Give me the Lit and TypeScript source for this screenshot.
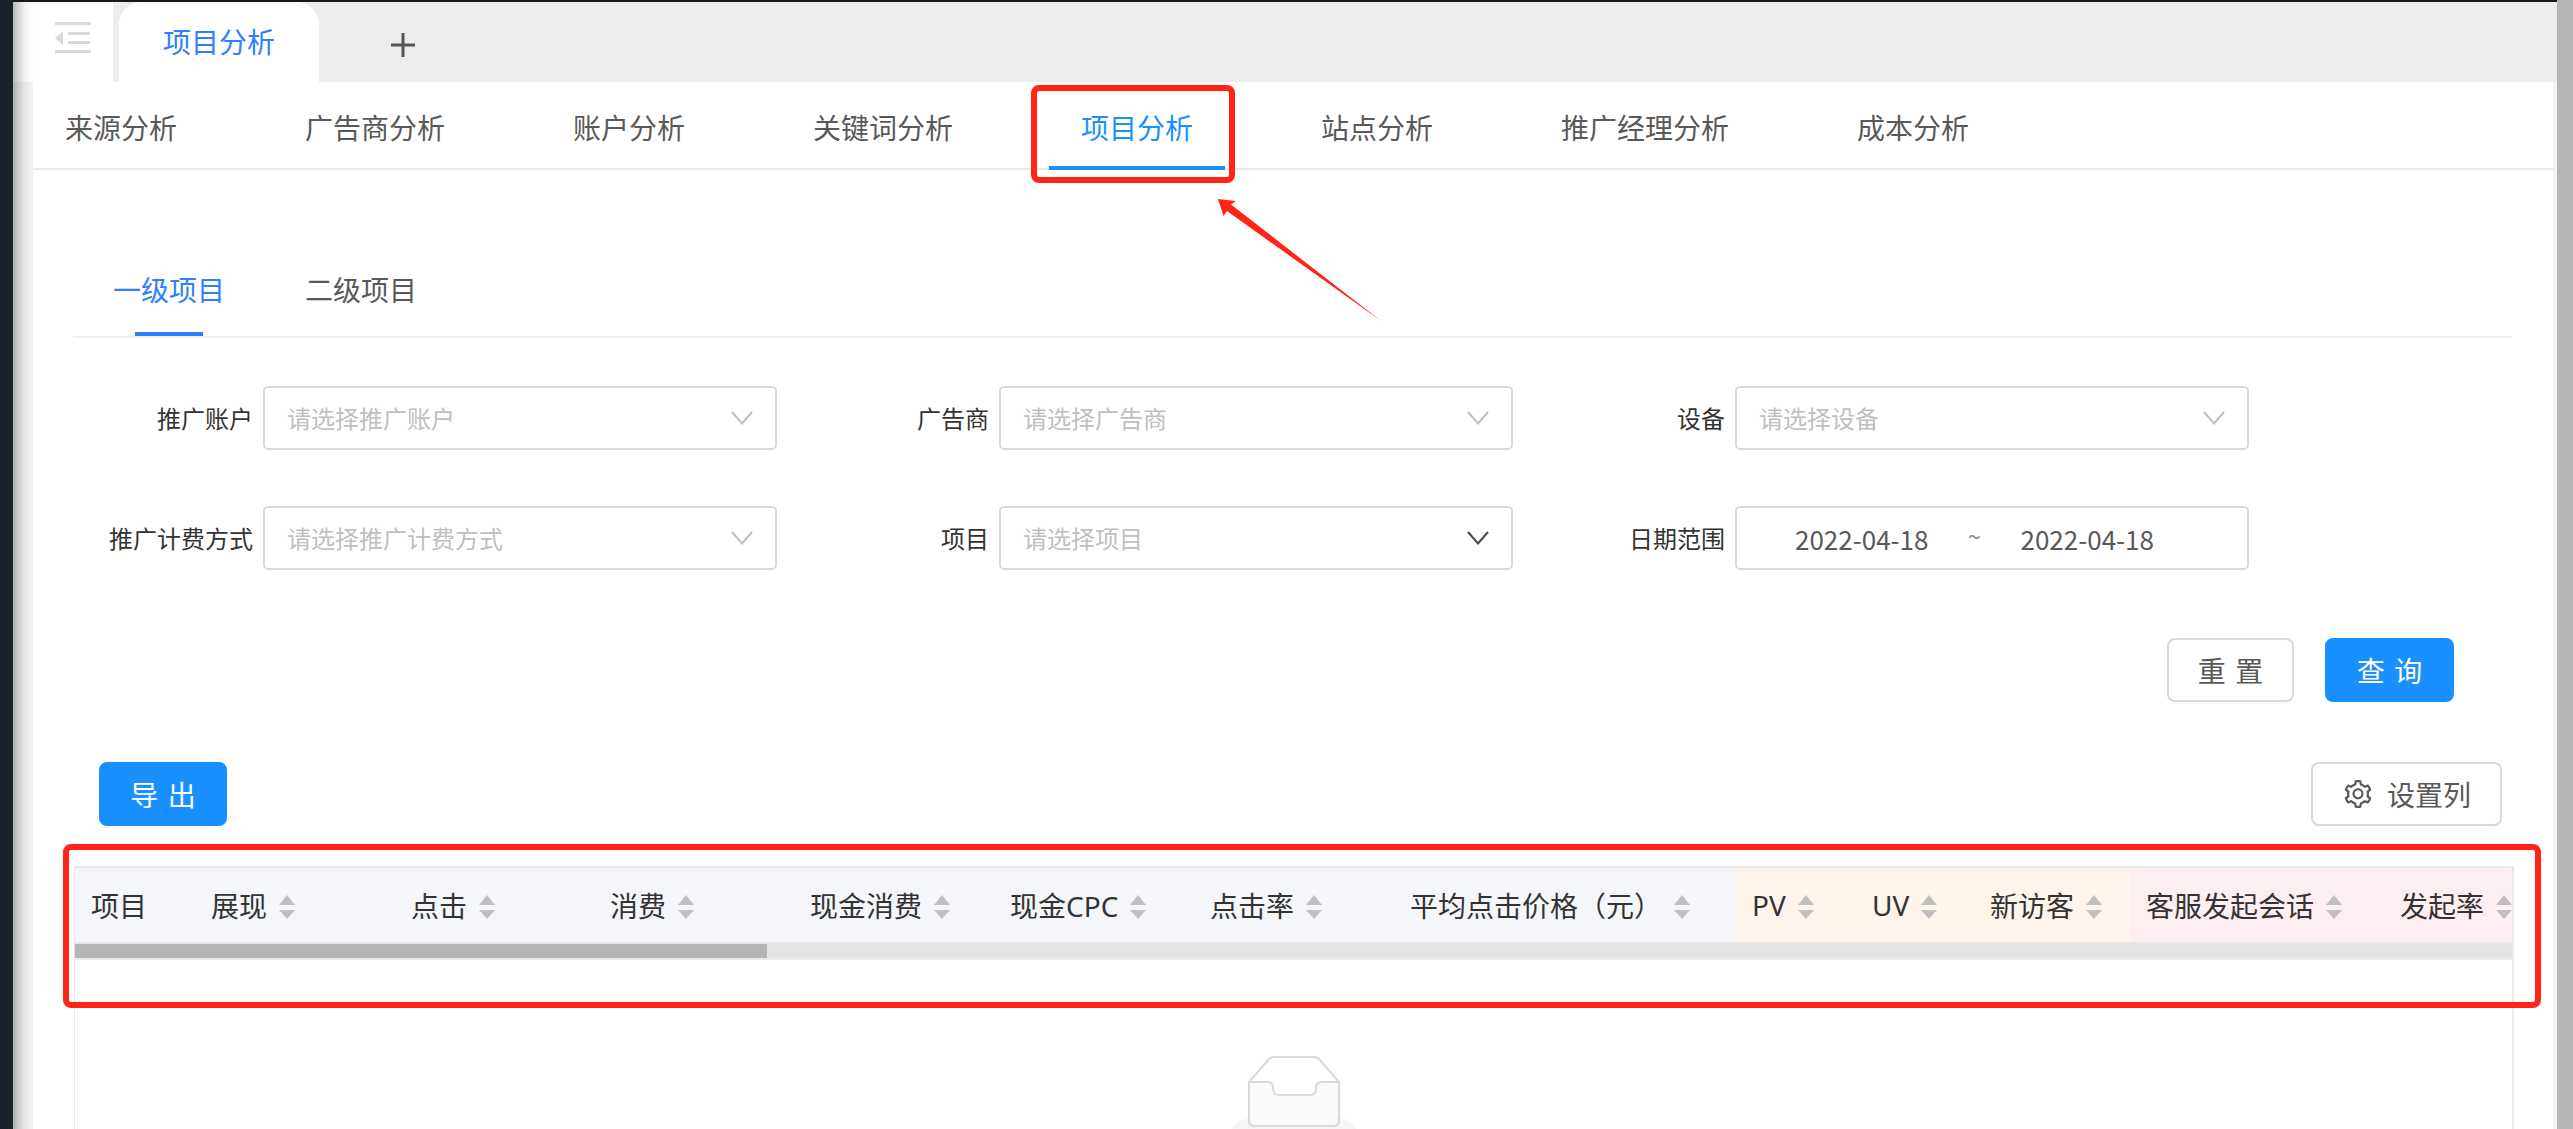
import { LitElement, html, css, svg } from "lit";
import { customElement } from "lit/decorators.js";

const NAV = ["来源分析", "广告商分析", "账户分析", "关键词分析", "项目分析", "站点分析", "推广经理分析", "成本分析"];
const FIELDS = [
  { label: "推广账户", ph: "请选择推广账户" },
  { label: "广告商", ph: "请选择广告商" },
  { label: "设备", ph: "请选择设备" },
  { label: "推广计费方式", ph: "请选择推广计费方式" },
  { label: "项目", ph: "请选择项目", dark: true },
];
const COLS = [
  { t: "项目", w: 120, sort: false, g: "" },
  { t: "展现", w: 200, sort: true, g: "" },
  { t: "点击", w: 199, sort: true, g: "" },
  { t: "消费", w: 200, sort: true, g: "" },
  { t: "现金消费", w: 200, sort: true, g: "" },
  { t: "现金CPC", w: 200, sort: true, g: "" },
  { t: "点击率", w: 200, sort: true, g: "" },
  { t: "平均点击价格（元）", w: 342, sort: true, g: "" },
  { t: "PV", w: 120, sort: true, g: "orange" },
  { t: "UV", w: 118, sort: true, g: "orange" },
  { t: "新访客", w: 156, sort: true, g: "orange" },
  { t: "客服发起会话", w: 254, sort: true, g: "pink" },
  { t: "发起率", w: 200, sort: true, g: "pink" },
];

const GEAR =
  "M924.8 625.7l-65.5-56c3.1-19 4.7-38.4 4.7-57.8s-1.6-38.8-4.7-57.8l65.5-56a32.03 32.03 0 0 0 9.3-35.2l-.9-2.6a443.74 443.74 0 0 0-79.7-137.9l-1.8-2.1a32.12 32.12 0 0 0-35.1-9.5l-81.3 28.9c-30-24.6-63.5-44-99.7-57.6l-15.7-85a32.05 32.05 0 0 0-25.8-25.7l-2.7-.5c-52.1-9.4-106.9-9.4-159 0l-2.7.5a32.05 32.05 0 0 0-25.8 25.7l-15.8 85.4a351.86 351.86 0 0 0-99 57.4l-81.9-29.1a32 32 0 0 0-35.1 9.5l-1.8 2.1a446.02 446.02 0 0 0-79.7 137.9l-.9 2.6c-4.5 12.5-.8 26.5 9.3 35.2l66.3 56.6c-3.1 18.8-4.6 38-4.6 57.1 0 19.2 1.5 38.4 4.6 57.1L99 625.5a32.03 32.03 0 0 0-9.3 35.2l.9 2.6c18.1 50.4 44.9 96.9 79.7 137.9l1.8 2.1a32.12 32.12 0 0 0 35.1 9.5l81.9-29.1c29.8 24.5 63.1 43.9 99 57.4l15.8 85.4a32.05 32.05 0 0 0 25.8 25.7l2.7.5a449.4 449.4 0 0 0 159 0l2.7-.5a32.05 32.05 0 0 0 25.8-25.7l15.7-85a350 350 0 0 0 99.7-57.6l81.3 28.9a32 32 0 0 0 35.1-9.5l1.8-2.1c34.8-41.1 61.6-87.5 79.7-137.9l.9-2.6c4.5-12.3.8-26.3-9.3-35zM788.3 465.9c2.5 15.1 3.8 30.6 3.8 46.1s-1.3 31-3.8 46.1l-6.6 40.1 74.7 63.9a370.03 370.03 0 0 1-42.6 73.6L721 702.8l-31.4 25.8c-23.9 19.6-50.5 35-79.3 45.8l-38.1 14.3-17.9 97a377.5 377.5 0 0 1-85 0l-17.9-97.2-37.8-14.5c-28.5-10.8-55-26.2-78.7-45.7l-31.4-25.9-93.4 33.2c-17-22.9-31.2-47.6-42.6-73.6l75.5-64.5-6.5-40c-2.4-14.9-3.7-30.3-3.7-45.5 0-15.3 1.2-30.6 3.7-45.5l6.5-40-75.5-64.5c11.3-26.1 25.6-50.7 42.6-73.6l93.4 33.2 31.4-25.9c23.7-19.5 50.2-34.9 78.7-45.7l37.9-14.3 17.9-97.2c28.1-3.2 56.8-3.2 85 0l17.9 97 38.1 14.3c28.7 10.8 55.4 26.2 79.3 45.8l31.4 25.8 92.8-32.9c17 22.9 31.2 47.6 42.6 73.6L781.8 426l6.5 39.9zM512 326c-97.2 0-176 78.8-176 176s78.8 176 176 176 176-78.8 176-176-78.8-176-176-176zm79.2 255.2A111.6 111.6 0 0 1 512 614c-29.9 0-58-11.7-79.2-32.8A111.6 111.6 0 0 1 400 502c0-29.9 11.7-58 32.8-79.2C454 401.6 482.1 390 512 390c29.9 0 58 11.6 79.2 32.8A111.6 111.6 0 0 1 624 502c0 29.9-11.7 58-32.8 79.2z";

const chevron = (dark?: boolean) => html`<svg class="chev ${dark ? "dark" : ""}" width="22" height="14" viewBox="0 0 22 14">
  <polyline points="1,1 11,12.5 21,1" fill="none" stroke="currentColor" stroke-width="2"></polyline>
</svg>`;

const sorter = html`<svg class="sorter" width="16" height="24" viewBox="0 0 16 24">
  <polygon points="8,0 16,10 0,10" fill="#bfbfbf"></polygon>
  <polygon points="0,15 16,15 8,24" fill="#bfbfbf"></polygon>
</svg>`;

@customElement("app-root")
export class AppRoot extends LitElement {
  static styles = css`
    :host {
      display: block;
      width: 100vw;
      height: 100vh;
      overflow: hidden;
      position: relative;
      background: #fff;
      font-family: "Noto Sans CJK SC", "Noto Sans", sans-serif;
      color: #333;
    }
    .shell { display: flex; height: 100%; }
    .rail-left { width: 13px; flex: none; background: #1c222c; }
    .rail-right { width: 16px; flex: none; background: #b5b5b7; }
    .content {
      flex: 1;
      min-width: 0;
      display: flex;
      flex-direction: column;
      border-top: 2px solid #17171f;
      position: relative;
    }
    .content::before {
      content: "";
      position: absolute;
      left: 0;
      top: 0;
      bottom: 0;
      width: 20px;
      background: linear-gradient(90deg, rgba(0,0,0,.28), rgba(0,0,0,.06) 55%, rgba(0,0,0,0));
      z-index: 2;
    }

    /* top tab strip */
    .tabbar { height: 80px; flex: none; display: flex; background: #ededed; }
    .toggle {
      width: 100px;
      flex: none;
      background: #fff;
      padding: 20px 0 0 42px;
      box-sizing: border-box;
    }
    .page-tab {
      margin-left: 6px;
      width: 200px;
      box-sizing: border-box;
      background: #fff;
      border-radius: 22px 22px 0 0;
      text-align: center;
      font-size: 28px;
      line-height: 78px;
      color: #2e80ff;
    }
    .plus { margin: 31px 0 0 72px; }

    .body { flex: 1; min-height: 0; display: flex; background: #f3f3f3; padding: 0 4px 0 20px; }
    .main { flex: 1; min-width: 0; background: #fff; display: flex; flex-direction: column; }

    /* second-level nav */
    .nav {
      height: 88px;
      flex: none;
      box-sizing: border-box;
      display: flex;
      gap: 64px;
      border-bottom: 2px solid #e8e8e8;
    }
    .nav-item {
      height: 88px;
      box-sizing: border-box;
      padding: 0 32px;
      font-size: 28px;
      line-height: 90px;
      color: #595959;
      border-bottom: 4px solid transparent;
      white-space: nowrap;
    }
    .nav-item.active { color: #1890ff; border-bottom-color: #1890ff; }

    /* third-level tabs */
    .subtabs {
      margin: 80px 41px 0 40px;
      display: flex;
      gap: 80px;
      padding-left: 40px;
      border-bottom: 2px solid #f0f0f0;
      flex: none;
    }
    .subtab {
      display: flex;
      flex-direction: column;
      align-items: center;
      font-size: 28px;
      color: #595959;
      line-height: 78px;
    }
    .subtab.active { color: #2e80ff; }
    .ink { width: 68px; height: 4px; margin-top: 4px; }
    .subtab.active .ink { background: #2e7dff; }

    /* filters */
    .form {
      margin: 48px 0 0 40px;
      display: grid;
      grid-template-columns: repeat(3, 704px);
      column-gap: 32px;
      row-gap: 56px;
      flex: none;
    }
    .field { display: flex; align-items: center; gap: 10px; }
    .label { width: 180px; flex: none; text-align: right; font-size: 24px; line-height: 34px; color: #333; }
    .control {
      flex: 1;
      height: 64px;
      box-sizing: border-box;
      border: 2px solid #d9d9d9;
      border-radius: 5px;
      display: flex;
      align-items: center;
      justify-content: space-between;
      padding: 0 22px 0 22px;
      font-size: 24px;
      color: #bfbfbf;
    }
    .ph { margin-top: -2px; }
    .chev { color: #bfbfbf; }
    .chev.dark { color: #4a4a4a; }
    .date {
      justify-content: flex-start;
      padding-left: 58px;
      color: #595959;
      font-size: 26px;
      gap: 41px;
    }
    .tilde {
      font-size: 24px;
      color: #8c8c8c;
      width: 10px;
      margin-top: -6px;
      display: flex;
      justify-content: center;
    }

    /* buttons */
    .actions {
      margin-top: 68px;
      padding-right: 99px;
      display: flex;
      justify-content: flex-end;
      gap: 31px;
      flex: none;
    }
    .btn {
      height: 64px;
      box-sizing: border-box;
      border-radius: 8px;
      display: flex;
      align-items: center;
      justify-content: center;
      font-size: 28px;
      white-space: pre;
      word-spacing: 3px;
      border: 2px solid #d9d9d9;
      background: #fff;
      color: #595959;
      box-shadow: 0 2px 0 rgba(0, 0, 0, .015);
    }
    .btn.w127 { width: 127px; }
    .btn.w128 { width: 128px; }
    .btn.w129 { width: 129px; }
    .btn.primary { background: #1890ff; border-color: #1890ff; color: #fff; }
    .btn.settings { width: 191px; gap: 13px; }

    .toolbar {
      margin-top: 60px;
      padding: 0 51px 0 66px;
      display: flex;
      justify-content: space-between;
      flex: none;
    }

    /* table */
    .table {
      margin: 40px 39px 0 41px;
      flex: 1;
      min-height: 0;
      display: flex;
      flex-direction: column;
      border: solid #e8e8e8;
      border-width: 0 2px 0 1px;
    }
    .thead {
      display: flex;
      flex: none;
      height: 78px;
      box-sizing: border-box;
      overflow: hidden;
      background: #f4f6fa;
      border-top: 2px solid #e8e8e8;
      border-bottom: 2px solid #e8e8e8;
    }
    .th {
      flex: none;
      box-sizing: border-box;
      padding-left: 16px;
      display: flex;
      align-items: center;
      gap: 12px;
      font-family: "Noto Sans", "Noto Sans CJK SC", sans-serif;
      font-size: 28px;
      color: #333;
      white-space: nowrap;
    }
    .th.orange { background: #fdf5ec; }
    .th.pink { background: #fdeef1; }
    .sorter { flex: none; margin-top: 4px; }
    .hscroll {
      height: 16px;
      flex: none;
      box-sizing: border-box;
      background: #e4e4e4;
      border-bottom: 2px solid #ebebeb;
    }
    .thumb { width: 692px; height: 14px; background: #b5b5b7; }
    .tbody { flex: 1; min-height: 0; display: flex; justify-content: center; padding-top: 95px; }

    /* annotation marks drawn over the page */
    .mark {
      position: absolute;
      box-sizing: border-box;
      border: 6px solid #ff2416;
      border-radius: 8px;
      z-index: 5;
    }
    .mark.tab { left: 1031px; top: 85px; width: 204px; height: 98px; }
    .mark.grid { left: 63px; top: 844px; width: 2478px; height: 164px; }
    .arrow { position: absolute; left: 1210px; top: 190px; z-index: 5; }
  `;

  render() {
    return html`
      <div class="shell">
        <div class="rail-left"></div>
        <div class="content">
          <div class="tabbar">
            <div class="toggle">
              <svg width="36" height="32" viewBox="0 0 36 32" fill="#d9d9d9">
                <rect x="0" y="0" width="36" height="3"></rect>
                <rect x="13" y="10" width="22" height="3"></rect>
                <rect x="13" y="19" width="22" height="3"></rect>
                <rect x="0" y="28" width="36" height="3"></rect>
                <polygon points="8,9 8,23 0,16"></polygon>
              </svg>
            </div>
            <div class="page-tab">项目分析</div>
            <svg class="plus" width="24" height="24" viewBox="0 0 24 24">
              <rect x="0" y="10.5" width="24" height="3" fill="#555"></rect>
              <rect x="10.5" y="0" width="3" height="24" fill="#555"></rect>
            </svg>
          </div>
          <div class="body">
            <div class="main">
              <div class="nav">
                ${NAV.map((n, i) => html`<div class="nav-item ${i === 4 ? "active" : ""}">${n}</div>`)}
              </div>
              <div class="subtabs">
                <div class="subtab active"><span>一级项目</span><div class="ink"></div></div>
                <div class="subtab"><span>二级项目</span><div class="ink"></div></div>
              </div>
              <div class="form">
                ${FIELDS.map(
                  (f) => html`<div class="field">
                    <div class="label">${f.label}</div>
                    <div class="control"><span class="ph">${f.ph}</span>${chevron(f.dark)}</div>
                  </div>`
                )}
                <div class="field">
                  <div class="label">日期范围</div>
                  <div class="control date">
                    <span>2022-04-18</span><span class="tilde">~</span><span>2022-04-18</span>
                  </div>
                </div>
              </div>
              <div class="actions">
                <div class="btn w127">重 置</div>
                <div class="btn primary w129">查 询</div>
              </div>
              <div class="toolbar">
                <div class="btn primary w128">导 出</div>
                <div class="btn settings">
                  <svg width="32" height="32" viewBox="0 0 1024 1024" fill="#595959">${svg`<path d=${GEAR}></path>`}</svg>
                  <span>设置列</span>
                </div>
              </div>
              <div class="table">
                <div class="thead">
                  ${COLS.map(
                    (c) => html`<div class="th ${c.g}" style="width:${c.w}px">
                      <span>${c.t}</span>${c.sort ? sorter : ""}
                    </div>`
                  )}
                </div>
                <div class="hscroll"><div class="thumb"></div></div>
                <div class="tbody">
                  <svg width="128" height="90" viewBox="0 0 128 90">
                    <ellipse cx="64" cy="74" rx="62" ry="16" fill="#f5f5f5"></ellipse>
                    <path d="M19 27 L39 4 Q41 2 44 2 H84 Q87 2 89 4 L109 27 V65 Q109 71 103 71 H25 Q19 71 19 65 Z" fill="#fff" stroke="#d9d9d9" stroke-width="2"></path>
                    <path d="M19 27 H38 Q43 27 43 33 Q43 40 49 40 H80 Q86 40 86 33 Q86 27 91 27 H109 V65 Q109 71 103 71 H25 Q19 71 19 65 Z" fill="#fafafa" stroke="#d9d9d9" stroke-width="2"></path>
                  </svg>
                </div>
              </div>
            </div>
          </div>
        </div>
        <div class="rail-right"></div>
      </div>
      <div class="mark tab"></div>
      <div class="mark grid"></div>
      <svg class="arrow" width="180" height="140" viewBox="1210 190 180 140">
        <polygon points="1218,199 1236,201 1231,204.5 1381,321 1227,211 1223.5,216" fill="#ff2416"></polygon>
      </svg>
    `;
  }
}
